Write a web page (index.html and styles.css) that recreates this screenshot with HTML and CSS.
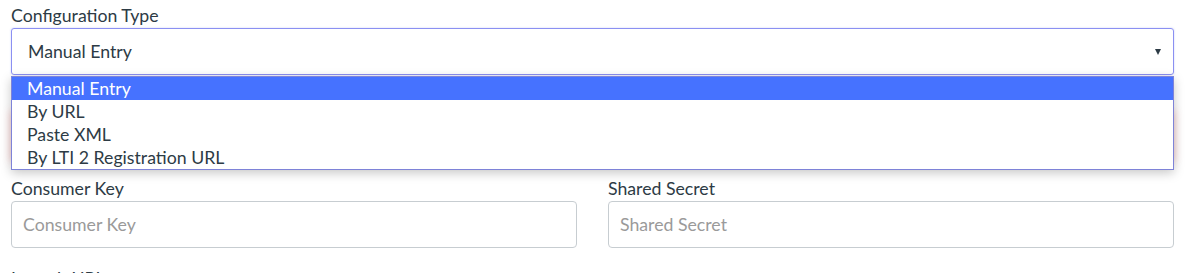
FILE: index.html
```html
<!DOCTYPE html>
<html lang="en">

<head>
    <meta charset="UTF-8">
    <title>External Tool Configuration</title>
    <link rel="stylesheet" href="styles.css">
</head>

<body>
    <div class="form">
        <div class="field">
            <label class="field-label">Configuration Type</label>
            <div class="select-wrap">
                <div class="select">
                    <span>Manual Entry</span>
                    <span class="arrow"></span>
                </div>
                <ul class="listbox">
                    <li class="option active">Manual Entry</li>
                    <li class="option">By URL</li>
                    <li class="option">Paste XML</li>
                    <li class="option">By LTI 2 Registration URL</li>
                </ul>
            </div>
        </div>

        <div class="notice"></div>

        <div class="row">
            <div class="field">
                <label class="field-label">Consumer Key</label>
                <input class="text-input" type="text" placeholder="Consumer Key">
            </div>
            <div class="field">
                <label class="field-label">Shared Secret</label>
                <input class="text-input" type="text" placeholder="Shared Secret">
            </div>
        </div>

        <div class="field">
            <label class="field-label">Launch URL</label>
        </div>
    </div>
</body>

</html>
```

FILE: styles.css
```css
body {
    margin: 0;
    font-family: Lato, "Open Sans", sans-serif;
    font-size: 17.7px;
    color: #2d3b45;
    background-color: white;
}

.form {
    padding: 6px 20px 0 11px;
}

.field-label {
    display: block;
    line-height: 20px;
    margin-bottom: 2px;
}

.select-wrap {
    position: relative;
}

.select {
    box-sizing: border-box;
    height: 47px;
    border: 1px solid #8b90f2;
    border-radius: 3px;
    display: flex;
    align-items: center;
    justify-content: space-between;
    padding: 0 12px 0 16px;
    box-shadow: 0 0 2px rgba(100, 110, 230, 0.35);
}

.arrow {
    width: 0;
    height: 0;
    border-left: 3.5px solid transparent;
    border-right: 3.5px solid transparent;
    border-top: 6px solid #2d3b45;
    margin-top: 1px;
}

.listbox {
    position: absolute;
    top: 48px;
    left: 0;
    right: 0;
    z-index: 2;
    margin: 0;
    padding: 0;
    list-style: none;
    background-color: white;
    border: 1px solid #7e83d8;
    box-shadow: 0 3px 10px rgba(0, 0, 0, 0.22);
}

.option {
    height: 23px;
    line-height: 23px;
    padding-left: 15px;
}

.option.active {
    background-color: #4672ff;
    color: white;
}

.notice {
    margin: 36px 0 18px;
    height: 50px;
    box-shadow: 0 0 8px rgba(230, 90, 90, 0.35);
}

.row {
    display: grid;
    grid-template-columns: 1fr 1fr;
    gap: 31px;
    margin-bottom: 21px;
}

.text-input {
    box-sizing: border-box;
    width: 100%;
    height: 47px;
    border: 1px solid #c7cdd1;
    border-radius: 4px;
    padding: 0 11px;
    font-family: inherit;
    font-size: 17.7px;
    color: #2d3b45;
}

.text-input::placeholder {
    color: #9a9a9a;
}
```
